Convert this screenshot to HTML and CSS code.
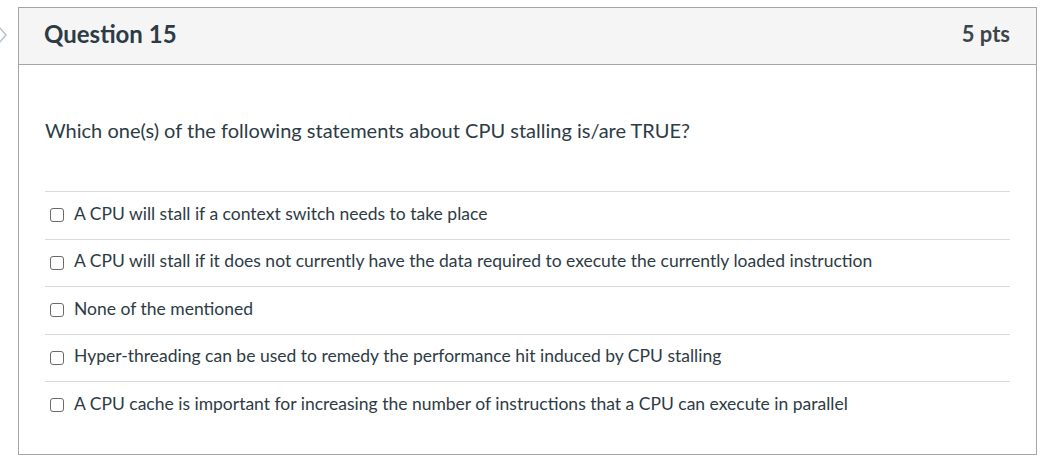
FILE: index.html
```html
<!DOCTYPE html>
<html>
<head>
<meta charset="utf-8">
<link rel="stylesheet" href="styles.css">
</head>
<body>
<div class="page">
  <svg class="chev" width="8" height="18" viewBox="0 0 8 18"><path d="M-1 1 L6 9 L-1 17" fill="none" stroke="#b8c4cc" stroke-width="1.6"/></svg>
  <div class="question">
    <div class="header">
      <span class="title">Question 15</span>
      <span class="pts">5 pts</span>
    </div>
    <div class="body">
      <p class="qtext">Which one(s) of the following statements about CPU stalling is/are TRUE?</p>
      <div class="answers">
        <label class="answer"><span class="box"></span><span class="atext">A CPU will stall if a context switch needs to take place</span></label>
        <label class="answer"><span class="box"></span><span class="atext">A CPU will stall if it does not currently have the data required to execute the currently loaded instruction</span></label>
        <label class="answer"><span class="box"></span><span class="atext">None of the mentioned</span></label>
        <label class="answer"><span class="box"></span><span class="atext">Hyper-threading can be used to remedy the performance hit induced by CPU stalling</span></label>
        <label class="answer"><span class="box"></span><span class="atext">A CPU cache is important for increasing the number of instructions that a CPU can execute in parallel</span></label>
      </div>
    </div>
  </div>
</div>
</body>
</html>
```
FILE: styles.css
```css
html, body { margin: 0; padding: 0; background: #fff; }
body { font-family: Lato, "Noto Sans", sans-serif; color: #2d3b45; }
.page { position: relative; padding: 7px 0 0 18px; }
.chev { position: absolute; left: 0; top: 26px; }
.question { width: 1017px; border: 1px solid #a5a5a5; }
.header {
  background: #f5f5f5; border-bottom: 1px solid #a5a5a5;
  display: flex; align-items: center; justify-content: space-between;
  padding: 0 26px 5px 25px; box-sizing: border-box; height: 57px;
}
.title { font-weight: 700; font-size: 24px; }
.pts { font-weight: 700; font-size: 22px; color: #3d454c; }
.body { padding: 0 26px 25px 26px; }
.qtext { margin: 0; padding: 53px 0 49px 0; font-size: 20px; line-height: 24px; }
.answers { border-top: 1px solid #dadada; }
.answer {
  display: flex; align-items: center; gap: 10px; height: 46.5px;
  font-size: 17.5px; padding-left: 5px;
}
.answer + .answer { border-top: 1px solid #dadada; }
.atext { margin-bottom: 4px; }
.box {
  width: 12px; height: 12px; border: 1px solid #6a6a6a; border-radius: 3px; flex: none;
}
```
